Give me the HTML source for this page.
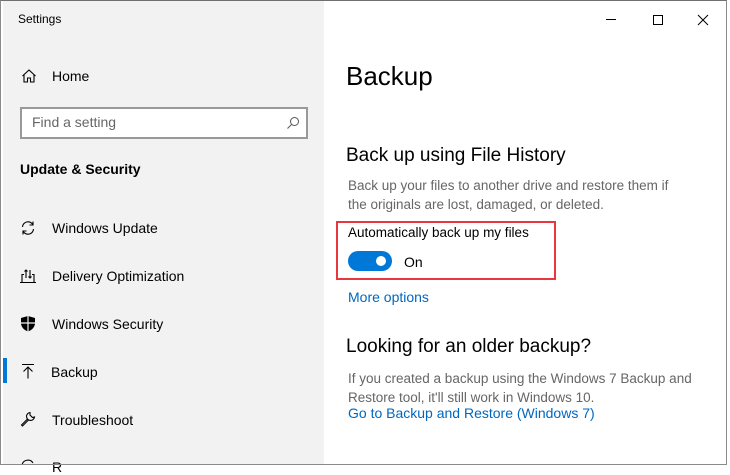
<!DOCTYPE html>
<html><head><style>
body{margin:0;width:730px;height:467px;background:#fff;overflow:hidden;font-family:"Liberation Sans",sans-serif;position:relative}
.frame{position:absolute;left:0;top:0;width:725px;height:463px;border:1px solid #8a8a8a;border-top-color:#6f6f6f;pointer-events:none;z-index:5}
.side{position:absolute;left:3px;top:0;width:321px;height:464px;background:#f2f2f2}
.t{position:absolute;white-space:nowrap;color:#000}
.ic{position:absolute}
</style></head><body>
<div class="side"></div>
<div class="t" style="left:18px;top:12px;font-size:12px">Settings</div>
<svg class="ic" style="left:21px;top:68px" width="16" height="16" viewBox="0 0 16 16" fill="none" stroke="#000" stroke-width="1.1"><path d="M1.5 8 L8 2 L14.5 8 M3 6.5 V14 H6.5 V10 H9.5 V14 H13 V6.5"/></svg>
<div class="t" style="left:52px;top:68px;font-size:14px">Home</div>
<div style="position:absolute;left:20px;top:107px;width:284px;height:28px;border:2px solid #999;background:#fff"></div>
<div class="t" style="left:32px;top:114px;font-size:14px;color:#666">Find a setting</div>
<svg class="ic" style="left:286px;top:116px" width="14" height="14" viewBox="0 0 14 14" fill="none" stroke="#555" stroke-width="1"><circle cx="8.5" cy="5.5" r="4"/><path d="M5.5 8.5 L1.5 12.5"/></svg>
<div class="t" style="left:20px;top:161px;font-size:14px;font-weight:bold">Update &amp; Security</div>
<svg class="ic" style="left:20px;top:220px" width="16" height="16" viewBox="0 0 16 16" fill="none" stroke="#000" stroke-width="1.1"><path d="M2.5 7 A5.5 5.5 0 0 1 13 5 M13.5 9 A5.5 5.5 0 0 1 3 11 M13 1.5 V5 H9.5 M3 14.5 V11 H6.5"/></svg>
<div class="t" style="left:52px;top:220px;font-size:14px">Windows Update</div>
<svg class="ic" style="left:19px;top:267px" width="18" height="17" viewBox="0 0 18 17" fill="none" stroke="#000" stroke-width="1.1"><path d="M1 15.5 H17 M3 15.5 V7.5 H5 M13 7.5 H15 V15.5 M7 3 V11 M5.5 4.5 L7 3 L8.5 4.5 M11 3 V11 M9.5 9.5 L11 11 L12.5 9.5"/></svg>
<div class="t" style="left:52px;top:268px;font-size:14px">Delivery Optimization</div>
<svg class="ic" style="left:20px;top:315px" width="16" height="17" viewBox="0 0 16 17"><path d="M8 1 L15 3 V8 C15 12 12 15 8 16.5 C4 15 1 12 1 8 V3 Z" fill="#000"/><path d="M8 1 V16.5 M1 8 H15" stroke="#f2f2f2" stroke-width="1.2"/></svg>
<div class="t" style="left:52px;top:316px;font-size:14px">Windows Security</div>
<div style="position:absolute;left:3px;top:358px;width:4px;height:25px;background:#0078d7"></div>
<svg class="ic" style="left:20px;top:363px" width="16" height="16" viewBox="0 0 16 16" fill="none" stroke="#000" stroke-width="1.1"><path d="M2 1.5 H14 M8 4 V15.5 M3.5 8.5 L8 4 L12.5 8.5"/></svg>
<div class="t" style="left:51px;top:364px;font-size:14px">Backup</div>
<svg class="ic" style="left:20px;top:411px" width="16" height="16" viewBox="0 0 16 16" fill="none" stroke="#000" stroke-width="1.1"><path d="M10 1.5 A4 4 0 1 0 14.5 6 L12.5 6.5 L10 4 Z M7.5 8 L1.5 14 L2.5 15 L8.5 9"/></svg>
<div class="t" style="left:52px;top:412px;font-size:14px">Troubleshoot</div>
<svg class="ic" style="left:20px;top:458px" width="16" height="8" viewBox="0 0 16 8" fill="none" stroke="#000" stroke-width="1.1"><path d="M2 7 A6 6 0 0 1 13 5"/></svg>
<div class="t" style="left:52px;top:459px;font-size:14px">R</div>

<svg class="ic" style="left:606px;top:12px" width="120" height="16" viewBox="0 0 120 16" fill="none" stroke="#000" stroke-width="1"><path d="M0 7.5 H10"/><rect x="47.5" y="3.5" width="9" height="9"/><path d="M92 3 L102 13 M102 3 L92 13"/></svg>

<div class="t" style="left:346px;top:61px;font-size:26px">Backup</div>
<div class="t" style="left:346px;top:145px;font-size:19px">Back up using File History</div>
<div class="t" style="left:348px;top:176px;font-size:13.5px;color:#666;line-height:19px">Back up your files to another drive and restore them if<br>the originals are lost, damaged, or deleted.</div>
<div style="position:absolute;left:336px;top:221px;width:216px;height:55px;border:2px solid #e8383d"></div>
<div class="t" style="left:348px;top:225px;font-size:13.5px">Automatically back up my files</div>
<div style="position:absolute;left:348px;top:251px;width:44px;height:20px;border-radius:10px;background:#0078d7"></div>
<div style="position:absolute;left:376px;top:256px;width:10px;height:10px;border-radius:5px;background:#fff"></div>
<div class="t" style="left:404px;top:254px;font-size:14px">On</div>
<div class="t" style="left:348px;top:289px;font-size:14px;color:#0067c0">More options</div>
<div class="t" style="left:346px;top:336px;font-size:19px">Looking for an older backup?</div>
<div class="t" style="left:348px;top:369px;font-size:13.5px;color:#666;line-height:19px">If you created a backup using the Windows 7 Backup and<br>Restore tool, it'll still work in Windows 10.</div>
<div class="t" style="left:348px;top:405px;font-size:14px;color:#0067c0">Go to Backup and Restore (Windows 7)</div>
<div class="frame"></div>
</body></html>
